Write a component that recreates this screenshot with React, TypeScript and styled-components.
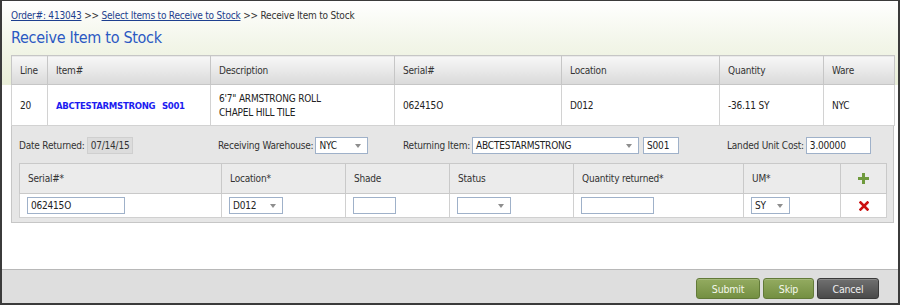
import React from "react";
import styled, { createGlobalStyle } from "styled-components";

const Global = createGlobalStyle`
  html, body { margin: 0; padding: 0; background: #fff; }
  body {
    font-family: "DejaVu Sans Condensed", "DejaVu Sans", Tahoma, sans-serif;
    font-size: 10px;
    letter-spacing: -0.2px;
    color: #333;
  }
  * { box-sizing: border-box; }
`;

const Page = styled.div`
  width: 900px;
  height: 305px;
  border-left: 2px solid #3b3b3b;
  border-right: 2px solid #3b3b3b;
  border-top: 1px solid #3b3b3b;
  border-bottom: 2px solid #3b3b3b;
  display: flex;
  flex-direction: column;
  background: #fff;
`;

const Content = styled.div`
  flex: 1;
  padding: 0 4px 0 9px;
  background: linear-gradient(to bottom, #ffffff 0px, #f3f6ea 40px, #e9eed8 84px, #ffffff 84px);
`;

const Breadcrumb = styled.div`
  height: 28px;
  padding-top: 8px;
  line-height: 14px;
  color: #333;
`;

const Crumb = styled.a`
  color: #1d3f8f;
  text-decoration: underline;
  cursor: pointer;
`;

const Title = styled.h1`
  margin: 0;
  height: 26px;
  font-size: 16px;
  letter-spacing: -0.3px;
  font-weight: normal;
  line-height: 18px;
  color: #2b59c3;
`;

const Table = styled.table`
  border-collapse: collapse;
  table-layout: fixed;
  width: 883px;
  background: #fff;
  border: 1px solid #c4c4c4;
`;

const Th = styled.th<{ $w: number }>`
  width: ${(p) => p.$w}px;
  height: 29px;
  padding: 0 0 0 8px;
  text-align: left;
  font-weight: normal;
  color: #333;
  background: linear-gradient(to bottom, #f7f7f7, #dadada);
  border: 1px solid #c6c6c6;
`;

const Td = styled.td`
  height: 41px;
  padding: 1px 0 0 8px;
  border: 1px solid #d2d2d2;
  color: #222;
  line-height: 14px;
  vertical-align: middle;
  white-space: nowrap;
`;

const ItemLink = styled.span`
  color: #1c1cf0;
  font-weight: bold;
  font-size: 9.5px;
  letter-spacing: -0.3px;
  word-spacing: 4px;
  white-space: nowrap;
`;

const Panel = styled.div`
  width: 883px;
  background: #e6e6e6;
  border: 1px solid #c6c6c6;
  border-top: none;
  padding: 10px 7px 4px 7px;
`;

const FilterRow = styled.div`
  display: grid;
  grid-template-columns: 199px 185px 324px 1fr;
  align-items: center;
  height: 18px;
  margin-bottom: 9px;
`;

const Field = styled.div`
  display: flex;
  align-items: center;
  gap: 2px;
`;

const Label = styled.span`
  color: #333;
  white-space: nowrap;
`;

const ReadBox = styled.span`
  display: inline-flex;
  align-items: center;
  height: 17px;
  padding: 0 3px;
  background: #dcdcdc;
  border: 1px solid #cfcfcf;
  color: #333;
`;

const TextInput = styled.input<{ $w: number }>`
  width: ${(p) => p.$w}px;
  height: 17px;
  padding: 0 3px;
  border: 1px solid #9fb1c9;
  background: #fff;
  font: inherit;
  letter-spacing: inherit;
  color: #222;
  outline: none;
  margin: 0;
`;

const SelectBox = styled.div<{ $w: number }>`
  position: relative;
  width: ${(p) => p.$w}px;
  height: 17px;
  padding: 0 3px;
  border: 1px solid #9fb1c9;
  background: #fff;
  color: #222;
  display: flex;
  align-items: center;
  line-height: 15px;
`;

const Arrow = styled.svg`
  position: absolute;
  right: 6px;
  top: 6px;
`;

const InnerTable = styled.table`
  border-collapse: collapse;
  table-layout: fixed;
  width: 867px;
  border: 1px solid #c6c6c6;
`;

const ITh = styled.th<{ $w: number; $center?: boolean }>`
  width: ${(p) => p.$w}px;
  height: 30px;
  padding: 0 0 0 ${(p) => (p.$center ? 0 : 8)}px;
  text-align: ${(p) => (p.$center ? "center" : "left")};
  font-weight: normal;
  color: #333;
  background: #ebebeb;
  border: 1px solid #c9c9c9;
`;

const ITd = styled.td<{ $center?: boolean }>`
  height: 24px;
  padding: 0 0 0 ${(p) => (p.$center ? 0 : 7)}px;
  text-align: ${(p) => (p.$center ? "center" : "left")};
  background: #fff;
  border: 1px solid #d0d0d0;
  vertical-align: middle;
`;

const IconWrap = styled.span`
  display: inline-flex;
  vertical-align: middle;
  cursor: pointer;
`;

const Footer = styled.div`
  height: 34px;
  background: #dedede;
  border-top: 1px solid #b8b8b8;
  display: flex;
  justify-content: flex-end;
  align-items: flex-start;
  gap: 3px;
  padding: 8px 19px 0 0;
`;

const Button = styled.button<{ $w: number; $dark?: boolean }>`
  width: ${(p) => p.$w}px;
  height: 21px;
  margin: 0;
  padding: 0;
  font: inherit;
  font-size: 10.5px;
  letter-spacing: inherit;
  border-radius: 3px;
  cursor: pointer;
  color: ${(p) => (p.$dark ? "#eeeeee" : "#f4f7ec")};
  border: 1px solid ${(p) => (p.$dark ? "#3a3a3a" : "#627a38")};
  background: ${(p) =>
    p.$dark
      ? "linear-gradient(to bottom, #707070, #4a4a4a)"
      : "linear-gradient(to bottom, #93ab60, #748f42)"};
  box-shadow: inset 0 1px 0 rgba(255, 255, 255, 0.18);
`;

const Select = ({ w, value }: { w: number; value: string }) => (
  <SelectBox $w={w}>
    {value}
    <Arrow width="6" height="4" viewBox="0 0 6 4">
      <path d="M0 0 H6 L3 4 Z" fill="#8e8e8e" />
    </Arrow>
  </SelectBox>
);

const PlusIcon = () => (
  <svg width="11" height="11" viewBox="0 0 11 11">
    <path d="M4 0 H7 V4 H11 V7 H7 V11 H4 V7 H0 V4 H4 Z" fill="#6f9a3d" />
  </svg>
);

const CrossIcon = () => (
  <svg width="10" height="10" viewBox="0 0 10 10">
    <path d="M1.5 1.5 L8.5 8.5 M8.5 1.5 L1.5 8.5" stroke="#cc1111" strokeWidth="2.6" strokeLinecap="square" />
  </svg>
);

export default function App() {
  return (
    <>
      <Global />
      <Page>
        <Content>
          <Breadcrumb>
            <Crumb>Order#: 413043</Crumb> &gt;&gt; <Crumb>Select Items to Receive to Stock</Crumb> &gt;&gt; Receive Item to Stock
          </Breadcrumb>
          <Title>Receive Item to Stock</Title>
          <Table>
            <thead>
              <tr>
                <Th $w={36}>Line</Th>
                <Th $w={163}>Item#</Th>
                <Th $w={184}>Description</Th>
                <Th $w={167}>Serial#</Th>
                <Th $w={158}>Location</Th>
                <Th $w={104}>Quantity</Th>
                <Th $w={71}>Ware</Th>
              </tr>
            </thead>
            <tbody>
              <tr>
                <Td>20</Td>
                <Td>
                  <ItemLink>ABCTESTARMSTRONG S001</ItemLink>
                </Td>
                <Td>
                  6'7" ARMSTRONG ROLL
                  <br />
                  CHAPEL HILL TILE
                </Td>
                <Td>062415O</Td>
                <Td>D012</Td>
                <Td>-36.11 SY</Td>
                <Td>NYC</Td>
              </tr>
            </tbody>
          </Table>
          <Panel>
            <FilterRow>
              <Field>
                <Label>Date Returned:</Label>
                <ReadBox>07/14/15</ReadBox>
              </Field>
              <Field>
                <Label>Receiving Warehouse:</Label>
                <Select w={53} value="NYC" />
              </Field>
              <Field>
                <Label>Returning Item:</Label>
                <Select w={167} value="ABCTESTARMSTRONG" />
                <TextInput $w={36} defaultValue="S001" style={{ marginLeft: 2 }} />
              </Field>
              <Field>
                <Label>Landed Unit Cost:</Label>
                <TextInput $w={65} defaultValue="3.00000" />
              </Field>
            </FilterRow>
            <InnerTable>
              <thead>
                <tr>
                  <ITh $w={202}>Serial#*</ITh>
                  <ITh $w={124}>Location*</ITh>
                  <ITh $w={104}>Shade</ITh>
                  <ITh $w={124}>Status</ITh>
                  <ITh $w={170}>Quantity returned*</ITh>
                  <ITh $w={97}>UM*</ITh>
                  <ITh $w={46} $center>
                    <IconWrap>
                      <PlusIcon />
                    </IconWrap>
                  </ITh>
                </tr>
              </thead>
              <tbody>
                <tr>
                  <ITd>
                    <TextInput $w={98} defaultValue="062415O" />
                  </ITd>
                  <ITd>
                    <Select w={54} value="D012" />
                  </ITd>
                  <ITd>
                    <TextInput $w={43} defaultValue="" />
                  </ITd>
                  <ITd>
                    <Select w={54} value="" />
                  </ITd>
                  <ITd>
                    <TextInput $w={73} defaultValue="" />
                  </ITd>
                  <ITd>
                    <Select w={39} value="SY" />
                  </ITd>
                  <ITd $center>
                    <IconWrap>
                      <CrossIcon />
                    </IconWrap>
                  </ITd>
                </tr>
              </tbody>
            </InnerTable>
          </Panel>
        </Content>
        <Footer>
          <Button $w={64}>Submit</Button>
          <Button $w={51}>Skip</Button>
          <Button $w={62} $dark>
            Cancel
          </Button>
        </Footer>
      </Page>
    </>
  );
}
